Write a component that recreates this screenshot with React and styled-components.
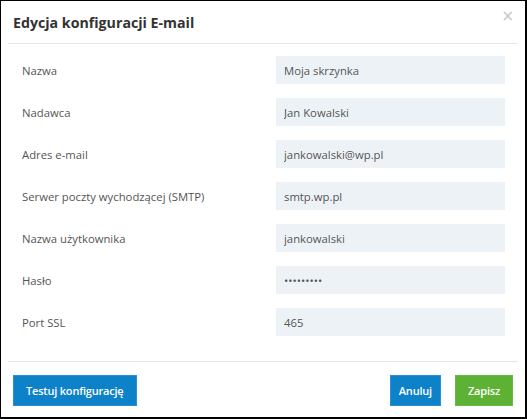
import React from "react";
import styled, { createGlobalStyle } from "styled-components";

const Global = createGlobalStyle`
  html, body { margin: 0; padding: 0; background: #fff; }
  * { box-sizing: border-box; }
  body { font-family: "Open Sans", "Noto Sans", sans-serif; }
`;

const Dialog = styled.div`
  width: 527px;
  height: 419px;
  background: #fff;
  border-style: solid;
  border-color: #000;
  border-width: 1px 2px 2px 1px;
  display: flex;
  flex-direction: column;
`;

const Header = styled.div`
  height: 43px;
  margin: 0 7px;
  padding: 0 4px 0 5px;
  border-bottom: 1px solid #e6e6e6;
  display: flex;
  align-items: center;
  justify-content: space-between;
`;

const Title = styled.h1`
  margin: 0;
  font-size: 14.2px;
  font-weight: 700;
  color: #333;
`;

const Close = styled.button`
  border: 0;
  background: none;
  padding: 0;
  color: #c4c4c4;
  font-size: 15px;
  line-height: 1;
  margin-top: -12px;
  cursor: pointer;
  font-family: "DejaVu Sans", sans-serif;
`;

const Body = styled.div`
  padding: 12px 20px 25px 21px;
  display: flex;
  flex-direction: column;
  gap: 14px;
`;

const Row = styled.div`
  display: grid;
  grid-template-columns: 254px 229px;
  align-items: center;
  height: 28px;
`;

const Label = styled.label`
  font-size: 11.3px;
  color: #555;
`;

const Input = styled.input`
  height: 28px;
  width: 229px;
  border: 0;
  background: #edf2f7;
  padding: 0 8px;
  font-family: inherit;
  font-size: 11.3px;
  color: #555;
  outline: none;
`;

const Footer = styled.div`
  margin: 0 7px;
  padding: 13px 5px 0;
  border-top: 1px solid #e6e6e6;
  display: flex;
  align-items: center;
  gap: 14px;
`;

const Spacer = styled.div`
  flex: 1;
`;

const Button = styled.button`
  height: 31px;
  border: 1px solid ${(p) => (p.$green ? "#66bb44" : "#2a8fd2")};
  background: ${(p) => (p.$green ? "#5db234" : "#0e82c8")};
  color: #fff;
  font-family: inherit;
  font-size: 11px;
  font-weight: 600;
  letter-spacing: -0.2px;
  padding: 0 ${(p) => p.$pad || 12}px;
  cursor: pointer;
`;

const fields = [
  ["Nazwa", "Moja skrzynka", "text"],
  ["Nadawca", "Jan Kowalski", "text"],
  ["Adres e-mail", "jankowalski@wp.pl", "text"],
  ["Serwer poczty wychodzącej (SMTP)", "smtp.wp.pl", "text"],
  ["Nazwa użytkownika", "jankowalski", "text"],
  ["Hasło", "123456789", "password"],
  ["Port SSL", "465", "text"],
];

export default function App() {
  return (
    <>
      <Global />
      <Dialog>
        <Header>
          <Title>Edycja konfiguracji E-mail</Title>
          <Close aria-label="Zamknij">×</Close>
        </Header>
        <Body>
          {fields.map(([label, value, type]) => (
            <Row key={label}>
              <Label>{label}</Label>
              <Input type={type} defaultValue={value} />
            </Row>
          ))}
        </Body>
        <Footer>
          <Button>Testuj konfigurację</Button>
          <Spacer />
          <Button $pad={8}>Anuluj</Button>
          <Button $green $pad={12}>Zapisz</Button>
        </Footer>
      </Dialog>
    </>
  );
}
